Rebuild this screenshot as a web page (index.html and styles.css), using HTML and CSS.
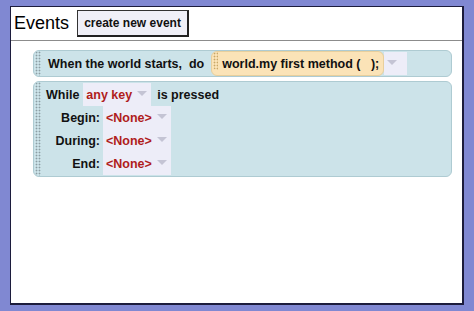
FILE: index.html
```html
<!doctype html>
<html>
<head>
    <meta charset="utf-8">
    <link rel="stylesheet" href="styles.css">
</head>
<body>
<div class="panel">
    <div class="head">
        <span class="title">Events</span>
        <button class="create">create new event</button>
    </div>
    <div class="events">
        <div class="event">
            <span class="grip"></span>
            <span class="label">When the world starts,&nbsp; do</span>
            <span class="call"><span class="grip small"></span>world.my first method (&nbsp;&nbsp; );</span>
            <span class="drop empty"><span class="arrow"></span></span>
        </div>
        <div class="event tall">
            <span class="grip"></span>
            <div class="rows">
                <div class="row">
                    <span class="label">While</span>
                    <span class="drop"><span class="val">any key</span><span class="arrow"></span></span>
                    <span class="label">is pressed</span>
                </div>
                <div class="row sub">
                    <span class="label key">Begin:</span>
                    <span class="drop"><span class="val">&lt;None&gt;</span><span class="arrow"></span></span>
                </div>
                <div class="row sub">
                    <span class="label key">During:</span>
                    <span class="drop"><span class="val">&lt;None&gt;</span><span class="arrow"></span></span>
                </div>
                <div class="row sub">
                    <span class="label key">End:</span>
                    <span class="drop"><span class="val">&lt;None&gt;</span><span class="arrow"></span></span>
                </div>
            </div>
        </div>
    </div>
</div>
</body>
</html>
```
FILE: styles.css
```css
body {
    margin: 0;
    background: #8088d2;
    font-family: "Liberation Sans", Arial, sans-serif;
}

.panel {
    margin: 6px 10px 0 10px;
    height: 296px;
    background: #ffffff;
    border: 1px solid #1c1c3c;
    border-right-width: 2px;
    border-bottom-width: 2px;
}

.head {
    height: 33px;
    border-bottom: 1px solid #8c8c8c;
    display: flex;
    align-items: center;
    padding-left: 3px;
}
.title {
    font-size: 18px;
    color: #000;
}
.create {
    margin-left: 8px;
    margin-top: -1px;
    height: 27px;
    width: 112px;
    padding: 0;
    font: bold 12px "Liberation Sans", Arial, sans-serif;
    color: #111;
    background: #f0f0f8;
    border: 1px solid #333;
    border-right: 2px solid #222;
    border-bottom: 2px solid #222;
}

.events {
    padding: 9px 10px 0 22px;
}

.event {
    display: flex;
    align-items: center;
    height: 25px;
    background: #cce3e9;
    border: 1px solid #aecbd2;
    border-radius: 6px;
    margin-bottom: 4px;
    font-weight: bold;
    font-size: 12.5px;
    color: #111;
}
.event.tall {
    height: 94px;
    align-items: flex-start;
}

.grip {
    align-self: stretch;
    width: 6px;
    margin-left: 1px;
    margin-right: 7px;
    background-image: radial-gradient(circle, #8c9ea4 0.8px, transparent 1.1px);
    background-size: 3px 3px;
    border-radius: 4px 0 0 4px;
}
.event.tall > .grip {
    margin-right: 5px;
}
.grip.small {
    display: inline-block;
    height: 18px;
    width: 5px;
    margin: 0 4px 0 0;
    vertical-align: middle;
    background-image: radial-gradient(circle, #c8a868 0.8px, transparent 1.1px);
}

.label {
    white-space: nowrap;
}

.call {
    margin-left: 7px;
    height: 23px;
    display: flex;
    align-items: center;
    padding: 0 4px 0 1px;
    background: #fbe3b7;
    border: 1px solid #e8cf9c;
    border-radius: 6px;
    white-space: nowrap;
}

.drop {
    display: flex;
    align-items: center;
    height: 23px;
    background: #ededf8;
    padding: 0 4px 0 3px;
    color: #b01c1c;
}
.drop.empty {
    width: 16px;
}
.val {
    margin-right: 5px;
}
.arrow {
    width: 0;
    height: 0;
    border-left: 5px solid transparent;
    border-right: 5px solid transparent;
    border-top: 5px solid #c4c4d4;
    margin-top: -2px;
}

.rows {
    display: flex;
    flex-direction: column;
    padding-top: 1px;
}
.row {
    display: flex;
    align-items: center;
    height: 23px;
}
.row .drop {
    margin: 0 6px 0 4px;
}
.row.sub .key {
    width: 54px;
    text-align: right;
}
.row.sub .drop {
    margin-left: 3px;
}
```
